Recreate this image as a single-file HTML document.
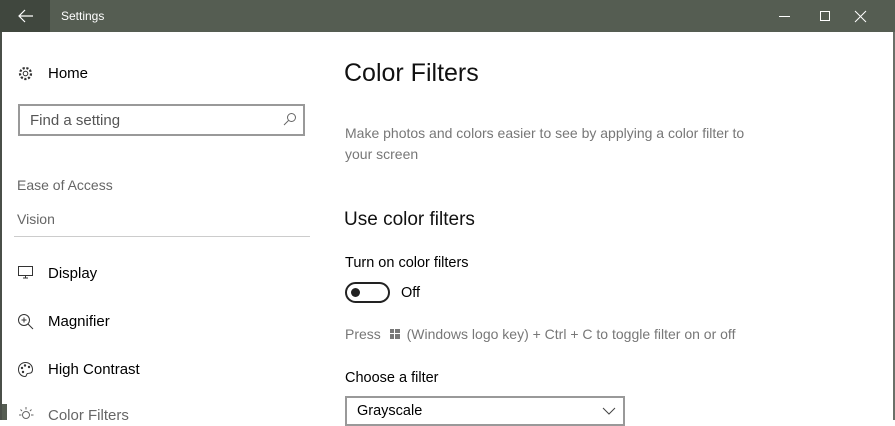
<!DOCTYPE html>
<html><head><style>
*{margin:0;padding:0;box-sizing:border-box}
body{width:895px;height:420px;overflow:hidden;background:#fff;font-family:"Liberation Sans",sans-serif;position:relative;color:#000}
.a{position:absolute;white-space:nowrap}
</style></head><body>
<div class="a" style="left:0;top:0;width:895px;height:32px;background:#555d52"></div>
<div class="a" style="left:0;top:0;width:50px;height:32px;background:#40473e"></div>
<div class="a" style="left:0;top:32px;width:2px;height:388px;background:#4a4f48"></div>
<div class="a" style="left:893px;top:32px;width:2px;height:388px;background:#6a6f68"></div>
<svg class="a" style="left:18px;top:9px" width="16" height="14"><path d="M1 7H15M7 1L1 7L7 13" stroke="#fff" stroke-width="1.2" fill="none"/></svg>
<div class="a" style="left:61px;top:9px;font-size:12px;color:#fff">Settings</div>
<svg class="a" style="left:770px;top:10px" width="110" height="14"><path d="M9 6.5H20" stroke="#fff"/><rect x="50.5" y="1.5" width="9" height="9" stroke="#fff" fill="none"/><path d="M85 1L96 12M96 1L85 12" stroke="#fff"/></svg>

<svg class="a" style="left:17px;top:65px" width="17" height="17" viewBox="0 0 17 17"><circle cx="8.5" cy="8.5" r="2.3" fill="none" stroke="#333"/><circle cx="8.5" cy="8.5" r="5.5" fill="none" stroke="#333" stroke-dasharray="2.2 1.6" stroke-width="2.2"/></svg>
<div class="a" style="left:48px;top:65px;font-size:15px">Home</div>
<div class="a" style="left:18px;top:104px;width:287px;height:32px;border:2px solid #999"></div>
<div class="a" style="left:30px;top:112px;font-size:15px;color:#555">Find a setting</div>
<svg class="a" style="left:283px;top:112px" width="14" height="14"><circle cx="8.5" cy="5.5" r="4" fill="none" stroke="#666"/><path d="M5.5 8.5L1 13" stroke="#666"/></svg>
<div class="a" style="left:17px;top:177px;font-size:14px;color:#666">Ease of Access</div>
<div class="a" style="left:17px;top:211px;font-size:14px;color:#666">Vision</div>
<div class="a" style="left:14px;top:236px;width:296px;height:1px;background:#ccc"></div>

<svg class="a" style="left:17px;top:265px" width="17" height="14"><rect x="1.5" y="1.5" width="14" height="9" fill="none" stroke="#333"/><path d="M6 13H11M8.5 10.5V13" stroke="#333"/></svg>
<div class="a" style="left:48px;top:265px;font-size:15px">Display</div>
<svg class="a" style="left:17px;top:313px" width="18" height="18"><circle cx="7" cy="7" r="5.5" fill="none" stroke="#333"/><path d="M11 11L16 16M4.5 7H9.5M7 4.5V9.5" stroke="#333"/></svg>
<div class="a" style="left:48px;top:313px;font-size:15px">Magnifier</div>
<svg class="a" style="left:17px;top:361px" width="17" height="17"><path d="M8.5 1.5C4.5 1.5 1.5 4.5 1.5 8.5S4.5 15.5 8 15.5C10 15.5 9 13 10.5 12.5S15.5 13 15.5 8.5C15.5 4.5 12.5 1.5 8.5 1.5Z" fill="none" stroke="#333"/><circle cx="5" cy="7" r="1.2" fill="#333"/><circle cx="8" cy="4.5" r="1.2" fill="#333"/><circle cx="12" cy="6" r="1.2" fill="#333"/><circle cx="6" cy="11" r="1.2" fill="#333"/></svg>
<div class="a" style="left:48px;top:361px;font-size:15px">High Contrast</div>
<div class="a" style="left:2px;top:404px;width:5px;height:16px;background:#555d52"></div>
<svg class="a" style="left:17px;top:406px" width="18" height="15"><circle cx="9" cy="9" r="3.5" fill="none" stroke="#666"/><path d="M9 1V3.5M2 9H4.5M14 9H16.5M3.5 3.5L5 5M14.5 3.5L13 5" stroke="#666"/></svg>
<div class="a" style="left:48px;top:407px;font-size:15px;color:#666">Color Filters</div>

<div class="a" style="left:344px;top:59px;font-size:25px;color:#111">Color Filters</div>
<div class="a" style="left:345px;top:123px;font-size:14px;color:#777;line-height:21px">Make photos and colors easier to see by applying a color filter to<br>your screen</div>
<div class="a" style="left:344px;top:209px;font-size:19px;color:#111">Use color filters</div>
<div class="a" style="left:345px;top:255px;font-size:14.5px">Turn on color filters</div>
<div class="a" style="left:345px;top:282px;width:45px;height:21px;border:2px solid #222;border-radius:11px"></div>
<div class="a" style="left:351px;top:288px;width:9px;height:9px;border-radius:50%;background:#222"></div>
<div class="a" style="left:401px;top:285px;font-size:14.5px">Off</div>
<div class="a" style="left:345px;top:326px;font-size:14px;color:#777">Press <span style="display:inline-block;width:10px;height:10px;margin:0 3px 0 5px;background:linear-gradient(#777,#777) 0 0/4px 4px no-repeat,linear-gradient(#777,#777) 5px 0/5px 4px no-repeat,linear-gradient(#777,#777) 0 5px/4px 5px no-repeat,linear-gradient(#777,#777) 5px 5px/5px 5px no-repeat"></span> (Windows logo key) + Ctrl + C to toggle filter on or off</div>
<div class="a" style="left:345px;top:370px;font-size:14.5px">Choose a filter</div>
<div class="a" style="left:345px;top:396px;width:280px;height:30px;border:2px solid #999"></div>
<div class="a" style="left:357px;top:403px;font-size:14.5px">Grayscale</div>
<svg class="a" style="left:602px;top:407px" width="14" height="8"><path d="M1 1L7 7L13 1" stroke="#444" fill="none"/></svg>
</body></html>
